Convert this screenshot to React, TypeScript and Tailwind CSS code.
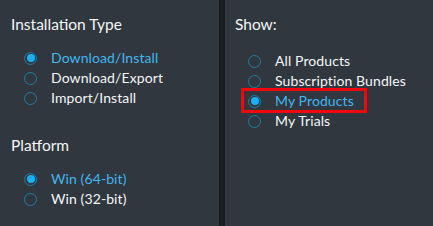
import React from "react";

type Option = { label: string; checked?: boolean; highlight?: boolean };

function Radio({ label, checked, highlight }: Option) {
  return (
    <div className="relative flex h-5 items-center">
      <span className="flex h-[13px] w-[13px] items-center justify-center rounded-full border-[1.5px] border-[#1c7ea6]">
        {checked && <span className="h-[8px] w-[8px] rounded-full bg-[#19b1f5]"></span>}
      </span>
      <span className={`ml-[14px] text-[14px] leading-5 tracking-[0.1px] ${checked ? "text-[#42b6f0]" : "text-[#f4f6f8]"}`}>
        {label}
      </span>
      {highlight && (
        <span className="absolute -left-[7px] -top-[3px] h-[25px] w-[126px] border-[3px] border-[#f2070f]"></span>
      )}
    </div>
  );
}

function Group({ title, options, className }: { title: string; options: Option[]; className?: string }) {
  return (
    <div className={className}>
      <h2 className="text-[15.5px] leading-5 text-[#f4f6f8]">{title}</h2>
      <div className="ml-[13px] mt-[14px] flex flex-col">
        {options.map((o) => (
          <Radio key={o.label} {...o} />
        ))}
      </div>
    </div>
  );
}

export default function App() {
  return (
    <div className="flex h-[226px] w-[433px] bg-[#31373e]" style={{ fontFamily: "Lato, 'Open Sans', sans-serif" }}>
      {/* Left column */}
      <div className="w-[219px] pl-[11px] pt-[14px]">
        <Group
          title="Installation Type"
          options={[
            { label: "Download/Install", checked: true },
            { label: "Download/Export" },
            { label: "Import/Install" },
          ]}
        />
        <Group
          className="mt-[27px]"
          title="Platform"
          options={[{ label: "Win (64-bit)", checked: true }, { label: "Win (32-bit)" }]}
        />
      </div>

      {/* Divider */}
      <div className="w-[6px] bg-[#1b1d1f]"></div>

      {/* Right column */}
      <div className="flex-1 pl-[10px] pt-[14px]">
        <h2 className="text-[15.5px] leading-5 text-[#f4f6f8]">Show:</h2>
        <div className="ml-[13px] mt-[17px] flex flex-col">
          <Radio label="All Products" />
          <Radio label="Subscription Bundles" />
          <Radio label="My Products" checked highlight />
          <Radio label="My Trials" />
        </div>
      </div>
    </div>
  );
}
